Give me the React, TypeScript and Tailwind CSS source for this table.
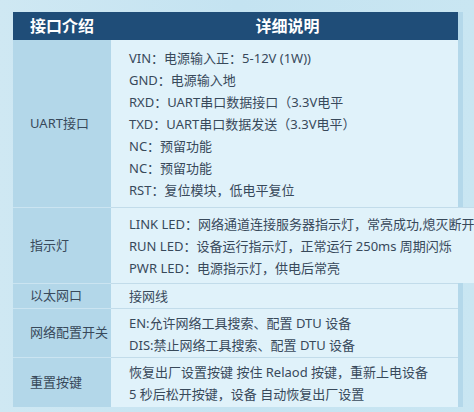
const FONT = { fontFamily: '"Noto Sans", "Noto Sans CJK SC", sans-serif' };

interface Row {
  name: string;
  lines: string[];
  pad: string;
}

const ROWS: Row[] = [
  {
    name: "UART接口",
    pad: "pt-[7px] pb-[6px]",
    lines: [
      "VIN：电源输入正：5-12V (1W))",
      "GND：电源输入地",
      "RXD：UART串口数据接口（3.3V电平",
      "TXD：UART串口数据发送（3.3V电平）",
      "NC：预留功能",
      "NC：预留功能",
      "RST：复位模块，低电平复位",
    ],
  },
  {
    name: "指示灯",
    pad: "pt-[5px] pb-[4px]",
    lines: [
      "LINK LED：网络通道连接服务器指示灯，常亮成功,熄灭断开",
      "RUN LED：设备运行指示灯，正常运行 250ms 周期闪烁",
      "PWR LED：电源指示灯，供电后常亮",
    ],
  },
  { name: "以太网口", pad: "py-[1px]", lines: ["接网线"] },
  {
    name: "网络配置开关",
    pad: "pt-[3px] pb-[1px]",
    lines: ["EN:允许网络工具搜索、配置 DTU 设备", "DIS:禁止网络工具搜索、配置 DTU 设备"],
  },
  {
    name: "重置按键",
    pad: "pt-[3px] pb-[2px]",
    lines: ["恢复出厂设置按键 按住 Relaod 按键，重新上电设备", "5 秒后松开按键，设备 自动恢复出厂设置"],
  },
];

export default function App() {
  return (
    <div
      className="w-[474px] h-[412px] overflow-hidden bg-gradient-to-r from-[#cfe8f3] via-[#c4e3f1] to-[#c9e6f2] pt-[12px] pl-[13px]"
      style={FONT}
    >
      <div className="w-[445px] shadow-[5px_0_0_#b4d8ea]">
        {/* Header */}
        <div className="grid grid-cols-[98px_1fr] h-[28px] bg-[#1f4d78] text-white font-bold text-[16px] items-center">
          <div className="text-center leading-none">接口介绍</div>
          <div className="text-center leading-none pl-[6px]">详细说明</div>
        </div>

        {ROWS.map((row, i) => (
          <div key={row.name} className="grid grid-cols-[98px_1fr] text-[13px] text-[#38495a]">
            <div
              className={`bg-[#b3d7e9] flex items-center pl-[17px] ${i > 0 ? "border-t border-[#cbe4f1]" : ""}`}
            >
              {row.name}
            </div>
            <div className={`bg-[#e0f2fa] pl-[18px] ${row.pad} ${i > 0 ? "border-t border-[#c2dcea]" : ""}`}>
              {row.lines.map((l, j) => (
                <div key={j} className="leading-[22px] whitespace-nowrap">
                  {l}
                </div>
              ))}
            </div>
          </div>
        ))}
      </div>
    </div>
  );
}
